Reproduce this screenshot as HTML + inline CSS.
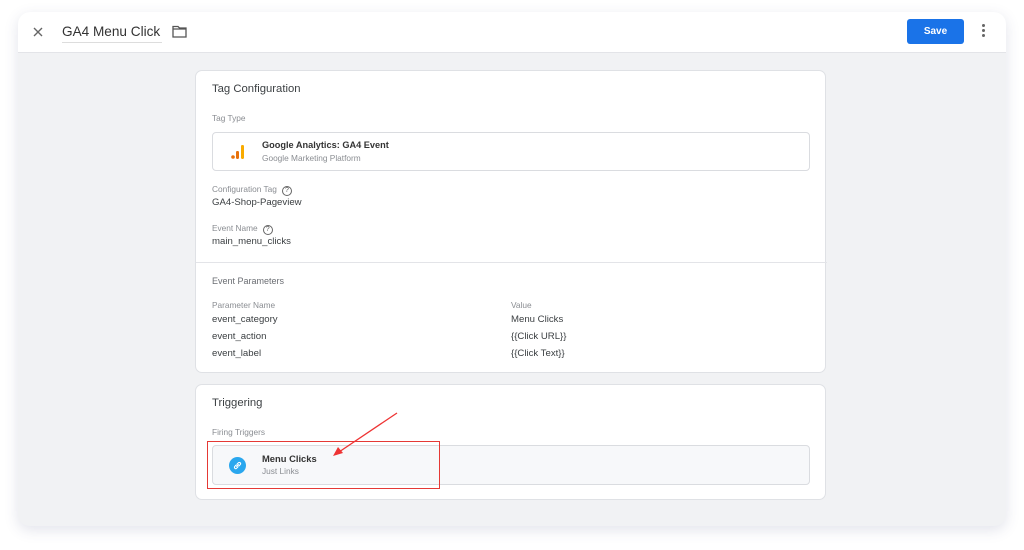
<!DOCTYPE html>
<html><head><meta charset="utf-8"><style>
*{margin:0;padding:0;box-sizing:border-box}
body{width:1024px;height:550px;background:#fff;font-family:"Liberation Sans",Arial,sans-serif;position:relative;overflow:hidden}
.a{position:absolute}
.win{left:18px;top:12px;width:988px;height:514px;background:#f1f2f4;border-radius:12px;box-shadow:0 4px 14px rgba(60,70,120,.15);overflow:hidden}
.hdr{left:0;top:0;width:988px;height:41px;background:#fff;border-bottom:1px solid #e3e4e8}
.card{background:#fff;border:1px solid #dfe1e5;border-radius:7px}
.t{font-size:9.6px;color:#3c4043;white-space:nowrap}
.l{font-size:8.3px;color:#8a8d92;white-space:nowrap}
.h{font-size:11.3px;color:#3c4043;white-space:nowrap}
.q{display:inline-block;width:10px;height:10px;border:1px solid #666;border-radius:50%;font-size:7px;text-align:center;line-height:8px;color:#555;margin-left:5px;vertical-align:0}
</style></head><body>
<div class="a win">
 <div class="a hdr">
  <svg class="a" style="left:15px;top:15px" width="10" height="10"><path d="M1 1l8 8M9 1l-8 8" stroke="#666" stroke-width="1.4"/></svg>
  <div class="a" style="left:44px;top:12px;font-size:13.6px;color:#333">GA4 Menu Click</div>
  <div class="a" style="left:44px;top:30px;width:100px;height:1px;background:#ddd"></div>
  <svg class="a" style="left:154px;top:13px" width="15" height="13" viewBox="0 0 15 13"><path d="M1 1.5h5l1.5 1.5H14v9H1z" fill="none" stroke="#555" stroke-width="1.3"/><path d="M1 4h13" stroke="#555" stroke-width="1.2"/></svg>
  <div class="a" style="left:889px;top:7px;width:57px;height:25px;background:#1a73e8;border-radius:3px;color:#fff;font-size:10px;font-weight:bold;text-align:center;line-height:25px">Save</div>
  <div class="a" style="left:964px;top:12px;width:3px;height:3px;background:#666;border-radius:50%;box-shadow:0 5px 0 #666,0 10px 0 #666"></div>
 </div>
</div>
<div class="a card" style="left:195px;top:70px;width:631px;height:303px">
 <div class="a h" style="left:16px;top:12px">Tag Configuration</div>
 <div class="a l" style="left:16px;top:42px">Tag Type</div>
 <div class="a" style="left:16px;top:61px;width:598px;height:39px;border:1px solid #dadce0;border-radius:4px">
  <svg class="a" style="left:18px;top:11px" width="14" height="16"><circle cx="2" cy="13" r="1.8" fill="#e8710a"/><rect x="5" y="7" width="3" height="8" rx="1.2" fill="#e8710a"/><rect x="10" y="1" width="3" height="14" rx="1.2" fill="#f9ab00"/></svg>
  <div class="a" style="left:49px;top:7px;font-size:9.2px;font-weight:bold;color:#333">Google Analytics: GA4 Event</div>
  <div class="a l" style="left:49px;top:20px">Google Marketing Platform</div>
 </div>
 <div class="a l" style="left:16px;top:113px">Configuration Tag<span class="q">?</span></div>
 <div class="a t" style="left:16px;top:126px">GA4-Shop-Pageview</div>
 <div class="a l" style="left:16px;top:152px">Event Name<span class="q">?</span></div>
 <div class="a t" style="left:16px;top:165px">main_menu_clicks</div>
 <div class="a" style="left:0;top:191px;width:631px;height:1px;background:#e3e4e8"></div>
 <div class="a" style="left:16px;top:205px;font-size:9px;color:#6b6e73">Event Parameters</div>
 <div class="a l" style="left:16px;top:229px">Parameter Name</div>
 <div class="a l" style="left:315px;top:229px">Value</div>
 <div class="a t" style="left:16px;top:243px">event_category</div>
 <div class="a t" style="left:315px;top:243px">Menu Clicks</div>
 <div class="a t" style="left:16px;top:260px">event_action</div>
 <div class="a t" style="left:315px;top:260px">{{Click URL}}</div>
 <div class="a t" style="left:16px;top:277px">event_label</div>
 <div class="a t" style="left:315px;top:277px">{{Click Text}}</div>
</div>
<div class="a card" style="left:195px;top:384px;width:631px;height:116px">
 <div class="a h" style="left:16px;top:12px">Triggering</div>
 <div class="a l" style="left:16px;top:42px">Firing Triggers</div>
 <div class="a" style="left:16px;top:60px;width:598px;height:40px;border:1px solid #dadce0;border-radius:4px;background:#f7f8fa">
  <div class="a" style="left:16px;top:11px;width:17px;height:17px;border-radius:50%;background:#2aa7ee;text-align:center;line-height:17px">
   <svg width="9" height="9" viewBox="0 0 10 10" style="margin-top:4px"><path d="M4 6l2-2M3.5 4.5l-1.5 1.5a1.4 1.4 0 002 2l1.5-1.5M6.5 5.5l1.5-1.5a1.4 1.4 0 00-2-2L4.5 3.5" fill="none" stroke="#fff" stroke-width="1.2" stroke-linecap="round"/></svg>
  </div>
  <div class="a" style="left:49px;top:7px;font-size:9.4px;font-weight:bold;color:#333">Menu Clicks</div>
  <div class="a l" style="left:49px;top:20px">Just Links</div>
 </div>
</div>
<div class="a" style="left:207px;top:441px;width:233px;height:48px;border:1.5px solid #e53935"></div>
<svg class="a" style="left:325px;top:410px" width="80" height="50"><path d="M72 3L14 42" stroke="#ee3333" stroke-width="1.3"/><path d="M8 46l5-9 5 6z" fill="#ee3333"/></svg>
</body></html>
